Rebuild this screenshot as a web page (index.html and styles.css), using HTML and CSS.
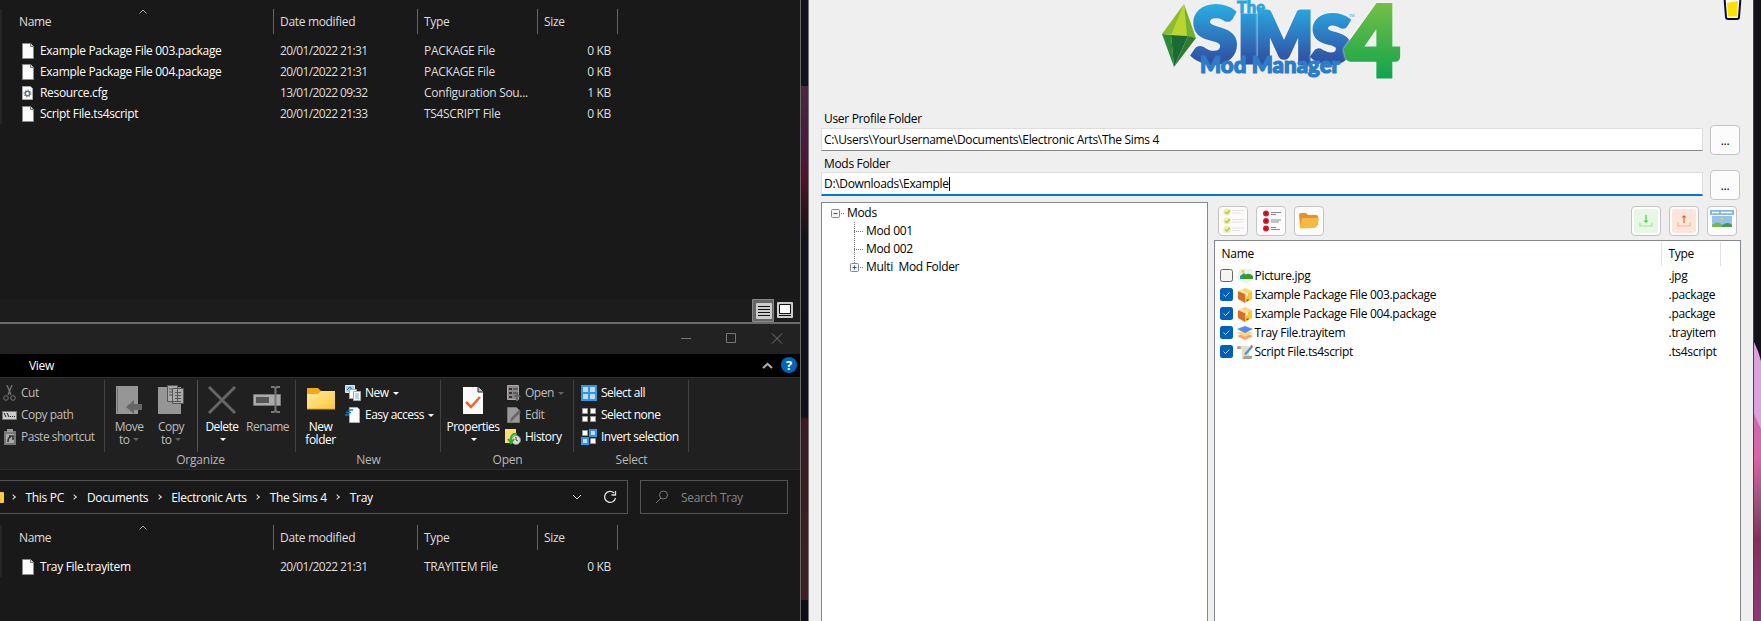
FILE: index.html
```
<!DOCTYPE html>
<html lang="en">
<head>
  <meta charset="UTF-8" />
  <meta name="viewport" content="width=device-width, initial-scale=1" />
  <title>The Sims 4 Mod Manager</title>
  <link rel="stylesheet" href="styles.css">
</head>
<body>
  <!-- shared icons -->
  <svg class="defs" width="0" height="0">
    <symbol id="file" viewBox="0 0 12 16"><path d="M.5.5h8l3 3v12H.5z" fill="#fbfbfb" stroke="#8a8a8a"/><path d="M8.5.5v3h3" fill="#ddd" stroke="#777"/></symbol>
    <symbol id="up" viewBox="0 0 8 5"><path d="M.5 4.500 4 1l3.500 3.500" fill="none" stroke="#aaa"/></symbol>
    <symbol id="box" viewBox="0 0 16 16"><path d="M1 4 8 7v9l-7-4z" fill="#d5702a"/><path d="M8 7l7-3v8l-7 4z" fill="#fcc62e"/><path d="M1 4 8 1l7 3-7 3z" fill="#ffd76f"/><path d="M4 2.700 11 5.700v3l-2 1v-3L2.500 3.500z" fill="#f3e5c8"/><path d="M9.500 13l2-1v1.500l-2 1z" fill="#70501c"/></symbol>
    <symbol id="check" viewBox="0 0 13 13"><rect width="13" height="13" rx="2.500" fill="#005fb8"/><path d="M3.500 6.500l2 2 4-4" fill="none" stroke="#bcd9f2"/></symbol>
  </svg>

  <div class="desktop">
    <div class="explorers">
      <div class="window top">
        <div class="files">
          <div class="row head">
            <span class="name">Name<svg class="sort" width="8" height="5"><use href="#up"/></svg></span><span>Date modified</span><span>Type</span><span>Size</span>
          </div>
          <div class="row"><span class="name"><svg width="12" height="16"><use href="#file"/></svg>Example Package File 003.package</span><span class="date">20/01/2022 21:31</span><span>PACKAGE File</span><span class="size">0 KB</span></div>
          <div class="row"><span class="name"><svg width="12" height="16"><use href="#file"/></svg>Example Package File 004.package</span><span class="date">20/01/2022 21:31</span><span>PACKAGE File</span><span class="size">0 KB</span></div>
          <div class="row"><span class="name"><svg width="12" height="16" viewBox="0 0 12 16"><path d="M.5 1.500h8l2 2v11H.5z" fill="#fbfbfb" stroke="#aaa"/><circle cx="5.500" cy="8.500" r="2.300" fill="none" stroke="#607078" stroke-width="1.500"/><circle cx="5.500" cy="8.500" r="3.500" fill="none" stroke="#607078" stroke-dasharray="1 1.750"/></svg>Resource.cfg</span><span class="date">13/01/2022 09:32</span><span>Configuration Sou...</span><span class="size">1 KB</span></div>
          <div class="row"><span class="name"><svg width="12" height="16"><use href="#file"/></svg>Script File.ts4script</span><span class="date">20/01/2022 21:33</span><span>TS4SCRIPT File</span><span class="size">0 KB</span></div>
        </div>
        <div class="status">
          <svg width="44" height="23" viewBox="0 0 44 23">
            <path d="M.5.500h21v22H.5z" fill="#666" stroke="#888"/>
            <rect x="4" y="4" width="16" height="16" rx="1" fill="#ccc"/>
            <path d="M6 7.500h12M6 10.500h12M6 13.500h12M6 16.500h12" stroke="#111"/>
            <rect x="25" y="3" width="16" height="16" rx="1" fill="#ccc"/>
            <path d="M27.500 5.500h11v9h-11z" fill="#fff" stroke="#111"/><path d="M27 16.500h12" stroke="#111"/>
          </svg>
        </div>
      </div>

      <div class="window bottom">
        <div class="titlebar">
          <svg width="104" height="30" viewBox="0 0 104 30" fill="none" stroke="#777"><path d="M1 14.500h10M46.500 9.500h9v9h-9zM92 9.500l10 10M102 9.500l-10 10"/></svg>
        </div>
        <div class="tabs">
          <span>View</span>
          <svg width="38" height="23" viewBox="0 0 38 23"><path d="M3 14l4.500-4 4.500 4" fill="none" stroke="#aaa" stroke-width="2.200"/><circle cx="29" cy="11" r="8" fill="#0067b8"/><text x="29" y="15.500" text-anchor="middle" class="help">?</text></svg>
        </div>
        <div class="ribbon">
          <div class="group clipboard">
            <div class="items list dim">
              <div><svg width="16" height="16" viewBox="0 0 16 16" fill="none" stroke="#777"><path d="M6 0l4 10M11 0 7 10" stroke-width="1.300"/><circle cx="5" cy="13" r="2.300"/><circle cx="12" cy="13" r="2.300"/></svg>Cut</div>
              <div><svg width="16" height="16" viewBox="0 0 16 16"><path d="M1.500 4.500h14v8h-14z" fill="#ccc" stroke="#777"/><path d="M3 6l2 4M6 6l2 4M9 9.500h1M11 9.500h1M13 9.500h1" stroke="#222"/></svg>Copy path</div>
              <div><svg width="16" height="16" viewBox="0 0 16 16"><path d="M3 2h12v14H3z" fill="#777"/><path d="M6 0h6v3H6z" fill="#999"/><path d="M5 5h8v9H5z" fill="#aaa"/><path d="M7 13c0-4 1-5 3-5M8 7h4v4" fill="none" stroke="#333" stroke-width="1.600"/></svg>Paste shortcut</div>
            </div>
            <p></p>
          </div>
          <div class="group organize">
            <div class="items">
              <div class="big dim"><svg width="28" height="32" viewBox="0 0 28 32"><path d="M1 1h22v28H1z" fill="#969696"/><path d="M2 2h1v26H2z" fill="#777"/><path d="M11 22l8-7v4h8v6h-8v4z" fill="#666"/></svg>Move<br>to <i></i></div>
              <div class="big copy dim"><svg width="28" height="32" viewBox="0 0 28 32"><path d="M1 2h23v27H1z" fill="#969696"/><path d="M10.500.500h10v16h-10zM15.500 3.500h11v15h-11z" fill="#aaa" stroke="#555"/><path d="M12 4h3M12 7h3M12 10h3M18 7.500h6M18 10.500h6M18 13.500h6M18 16.500h6" stroke="#555"/></svg>Copy<br>to <i></i></div>
              <div class="big delete"><svg width="30" height="32" viewBox="0 0 30 32"><path d="M2 2l26 26M28 2 2 28" stroke="#666" stroke-width="3"/></svg>Delete<br><i></i></div>
              <div class="big rename dim"><svg width="30" height="32" viewBox="0 0 30 32"><path d="M1.500 9.500h27v11h-27z" fill="#aaa" stroke="#777"/><path d="M4 12h13v6H4z" fill="#555"/><path d="M19 2h3l1.500 1L25 2h3M23.500 3v23M19 27h3l1.500-1 1.500 1h3" fill="none" stroke="#777" stroke-width="2"/></svg>Rename</div>
            </div>
            <p>Organize</p>
          </div>
          <div class="group new">
            <div class="items">
              <div class="big"><svg width="30" height="32" viewBox="0 0 30 32"><path d="M1 3h11l3 3h14v5H1z" fill="#f0aa16"/><path d="M1 9h11l3-3h14v18H1z" fill="url(#fold)"/><path d="M1 24h28" stroke="#e5a31c"/><defs><linearGradient id="fold" x2="1" y2="1"><stop stop-color="#ffe9a0"/><stop offset="1" stop-color="#fdca3b"/></linearGradient></defs></svg>New<br>folder</div>
              <div class="list">
                <div><svg width="16" height="16" viewBox="0 0 16 16"><path d="M.5.500h9v7h-9z" fill="#9cd2f1" stroke="#eee"/><path d="M2 5l3-3 3 4" fill="none" stroke="#27668e"/><path d="M4.500 4.500h7v9h-7z" fill="#fff" stroke="#aaa"/><path d="M8.500 6.500h7v9h-7z" fill="#fff" stroke="#aaa"/><path d="M10 9h4M10 11h4M10 13h4" stroke="#79a9cd"/></svg>New <i></i></div>
                <div><svg width="16" height="16" viewBox="0 0 16 16"><path d="M4.500.500h8l2 2v13h-10z" fill="#fbfbfb" stroke="#aaa"/><path d="M3 3h5M1 5.500h5M0 8h4" stroke="#1677cb" stroke-width="1.500"/></svg>Easy access <i></i></div>
              </div>
            </div>
            <p>New</p>
          </div>
          <div class="group open">
            <div class="items">
              <div class="big"><svg width="24" height="32" viewBox="0 0 24 32"><path d="M2 2h16l4 4v23H2z" fill="#fafafa"/><path d="M17 1v6h6z" fill="#bbb" stroke="#222"/><path d="M5 17l5 5 9-10" fill="none" stroke="#f2622a" stroke-width="2.500"/></svg>Properties<br><i></i></div>
              <div class="list">
                <div class="dim"><svg width="16" height="16" viewBox="0 0 16 16"><path d="M2.500.500h11v14h-11z" fill="#888" stroke="#aaa"/><path d="M4 3h3v2H4zM4 7h3v2H4zM4 11h3v2H4z" fill="#333"/><path d="M8 4h5M8 8h5" stroke="#333"/><path d="M8 12l4-4 4 4h-3v4h-2v-4z" fill="#666"/></svg>Open <i></i></div>
                <div class="dim"><svg width="16" height="16" viewBox="0 0 16 16"><path d="M2.500.500h9l3 3v12h-12z" fill="#999" stroke="#777"/><path d="M5 15l1-4L14 3l2 2-8 8z" fill="#666"/></svg>Edit</div>
                <div><svg width="16" height="16" viewBox="0 0 16 16"><path d="M0 0h11v14H0z" fill="#ffdc74"/><circle cx="11" cy="11" r="4.500" fill="#ddd" stroke="#888"/><path d="M11 8v3l2 1" fill="none" stroke="#444"/><path d="M12 5C7 4 5 8 6 13M3 10l3 4 3-4" fill="none" stroke="#28b32d" stroke-width="2"/></svg>History</div>
              </div>
            </div>
            <p>Open</p>
          </div>
          <div class="group select">
            <div class="items list">
              <div><svg width="16" height="16" viewBox="0 0 16 16"><path d="M0 0h16v16H0z" fill="#3493e5"/><path d="M2 2h5v5H2zM9 2h5v5H9zM2 9h5v5H2zM9 9h5v5H9z" fill="#b7defb"/></svg>Select all</div>
              <div><svg width="16" height="16" viewBox="0 0 16 16"><path d="M1.500 1.500h5v5h-5zM9.500 1.500h5v5h-5zM1.500 9.500h5v5h-5zM9.500 9.500h5v5h-5z" fill="#fff" stroke="#999"/></svg>Select none</div>
              <div><svg width="16" height="16" viewBox="0 0 16 16"><path d="M8 0h8v8H8zM0 8h8v8H0z" fill="#3493e5"/><path d="M10 2h4v4h-4zM2 10h4v4H2z" fill="#b7defb"/><path d="M1.500 1.500h5v5h-5zM9.500 9.500h5v5h-5z" fill="#fff" stroke="#999"/></svg>Invert selection</div>
            </div>
            <p>Select</p>
          </div>
        </div>

        <div class="address">
          <div class="path">
            <b class="folder"></b><em></em><span>This PC</span><em></em><span>Documents</span><em></em><span>Electronic Arts</span><em></em><span>The Sims 4</span><em></em><span>Tray</span>
            <svg width="48" height="20" viewBox="0 0 48 20" fill="none" stroke="#ddd"><path d="M2 8l4 4 4-4"/><path d="M43 6a5.500 5.500 0 1 0 1.500 5M44.500 4v4h-4" stroke-width="1.300"/></svg>
          </div>
          <div class="search"><svg width="14" height="14" viewBox="0 0 14 14" fill="none" stroke="#777"><circle cx="8.500" cy="5" r="4"/><path d="M6 8l-5 5"/></svg>Search Tray</div>
        </div>
        <div class="files">
          <div class="row head">
            <span class="name">Name<svg class="sort" width="8" height="5"><use href="#up"/></svg></span><span>Date modified</span><span>Type</span><span>Size</span>
          </div>
          <div class="row"><span class="name"><svg width="12" height="16"><use href="#file"/></svg>Tray File.trayitem</span><span class="date">20/01/2022 21:31</span><span>TRAYITEM File</span><span class="size">0 KB</span></div>
        </div>
      </div>
    </div>

    <div class="manager">
      <header>
        <svg class="logo" width="290" height="90" viewBox="0 0 290 90">
          <defs>
            <linearGradient id="blue" gradientUnits="userSpaceOnUse" x1="0" y1="6" x2="0" y2="66"><stop stop-color="#29abe2"/><stop offset=".85" stop-color="#2f57a8"/><stop offset="1" stop-color="#2f4fa0"/></linearGradient>
            <linearGradient id="green" gradientUnits="userSpaceOnUse" x1="0" y1="4" x2="0" y2="78"><stop stop-color="#72bf44"/><stop offset="1" stop-color="#12a44d"/></linearGradient>
          </defs>
          <path d="M44 4 22 34l13 1z" fill="#8db92e"/><path d="M44 4 31 35l17 1z" fill="#b9d531"/><path d="M44 4l12 34-9-2z" fill="#78b02c"/>
          <path d="M22 34l9 1 3 32z" fill="#2d8a35"/><path d="M31 35l17 1-14 31z" fill="#176b33"/><path d="M48 36l8 2-22 29z" fill="#2f7b32"/>
          <g class="sims" fill="url(#blue)" stroke="url(#blue)">
            <text x="52" y="62" font-size="76" textLength="45" lengthAdjust="spacingAndGlyphs">S</text>
            <text x="98" y="62" font-size="62" textLength="22" lengthAdjust="spacingAndGlyphs">I</text>
            <text x="115" y="63" font-size="70" textLength="58" lengthAdjust="spacingAndGlyphs">M</text>
            <text x="172" y="62" font-size="63" textLength="39" lengthAdjust="spacingAndGlyphs">S</text>
          </g>
          <text class="four" x="206" y="76" font-size="97" textLength="54" lengthAdjust="spacingAndGlyphs" fill="url(#green)" stroke="url(#green)">4</text>
          <text class="the" x="97" y="12.500" textLength="28" lengthAdjust="spacingAndGlyphs">The</text>
          <text class="tm" x="209" y="17">TM</text>
          <text class="sub" x="60" y="73" textLength="140" lengthAdjust="spacingAndGlyphs">Mod Manager</text>
        </svg>
        <svg class="drink" width="20" height="21" viewBox="0 0 20 21"><path d="M1.500-2 3 17q0 2 2 2h9q2 0 2-2l1.500-19z" fill="#fff" stroke="#0e0b2e" stroke-width="2"/><path d="M4 3l5-1 6-1-1 15.500H5z" fill="#ffe100"/></svg>
      </header>
      <label>User Profile Folder</label>
      <div class="field"><div class="input">C:\Users\YourUsername\Documents\Electronic Arts\The Sims 4</div><div class="button">...</div></div>
      <label>Mods Folder</label>
      <div class="field"><div class="input active">D:\Downloads\Example<span class="caret"></span></div><div class="button">...</div></div>

      <div class="panes">
        <div class="tree">
          <div class="node"><svg width="14" height="18" viewBox="0 0 14 18"><rect x=".5" y="5.500" width="8" height="8" rx="1" fill="#f5f5f5" stroke="#888"/><path d="M2.500 9.500h4" stroke="#3050a8"/><path d="M10 9.500h4" stroke="#777" stroke-dasharray="1 1"/></svg>Mods</div>
          <div class="node child"><svg width="14" height="18" viewBox="0 0 14 18"><path d="M4.500 0v18M4 9.500h9" stroke="#777" stroke-dasharray="1 1"/></svg>Mod 001</div>
          <div class="node child"><svg width="14" height="18" viewBox="0 0 14 18"><path d="M4.500 0v18M4 9.500h9" stroke="#777" stroke-dasharray="1 1"/></svg>Mod 002</div>
          <div class="node child"><svg width="14" height="18" viewBox="0 0 14 18"><path d="M4.500 0v5M10 9.500h4" stroke="#777" stroke-dasharray="1 1"/><rect x=".5" y="5.500" width="8" height="8" rx="1" fill="#f5f5f5" stroke="#888"/><path d="M2.500 9.500h4M4.500 7.500v4" stroke="#3050a8"/></svg>Multi&nbsp; Mod Folder</div>
        </div>
        <div class="mods">
          <div class="toolbar">
            <div class="button"><svg width="24" height="26" viewBox="0 0 24 26"><g fill="#f8eb9b"><circle cx="6" cy="4" r="3.600"/><circle cx="6" cy="13" r="3.600"/><circle cx="6" cy="21.500" r="3.600"/></g><path d="M4 4l2 1.500L9 2M4 13l2 1.500L9 11M4 21.500l2 1.500 3-3.500" fill="none" stroke="#8fd07c" stroke-width="1.500"/><path d="M11 2.500h12M11 5h8M11 11.500h12M11 14h11M11 20h12M11 22.500h8" stroke="#eadfdc"/></svg></div>
            <div class="button"><svg width="24" height="26" viewBox="0 0 24 26"><g fill="#e01c2d"><circle cx="7" cy="5.500" r="3"/><circle cx="7" cy="13" r="3"/><circle cx="7" cy="20.500" r="3"/></g><path d="M5.500 4l3 3m0-3-3 3m0 4.500 3 3m0-3-3 3m0 4.500 3 3m0-3-3 3" stroke="#96101c"/><path d="M12 4.500h10M12 6.500h5M12 12h10M12 14h8M12 19.500h5M12 21.500h9" stroke="#888"/></svg></div>
            <div class="button"><svg width="24" height="26" viewBox="0 0 24 26"><path d="M2 7q0-2 2-2h5l2 2h8q2 0 2 2v8H3z" fill="#e88f33"/><path d="M6 10h15q1 0 1 1l-2 7q-1 2-3 2L4 20.500q-2 0-1-3l2-7z" fill="#f7b940"/></svg></div>
            <div class="space"></div>
            <div class="button"><svg width="26" height="26" viewBox="0 0 26 26" fill="none"><rect x="1" y="1" width="24" height="24" rx="3" fill="#e8f7e5"/><path d="M7 14.500v3.500h12v-3.500" stroke="#a6e495" stroke-width="1.200"/><path d="M13 7v7" stroke="#70d75f" stroke-width="1.500"/><path d="M10.500 12.500h5L13 15z" fill="#4dcc40"/></svg></div>
            <div class="button"><svg width="26" height="26" viewBox="0 0 26 26" fill="none"><rect x="1" y="1" width="24" height="24" rx="3" fill="#fce6dc"/><path d="M7 14.500v3.500h12v-3.500" stroke="#fbb28d" stroke-width="1.200"/><path d="M13 9v6" stroke="#ed805d" stroke-width="1.500"/><path d="M10.500 9.500h5L13 7z" fill="#e85b30"/></svg></div>
            <div class="button"><svg width="26" height="26" viewBox="0 0 26 26"><path d="M1 2h24v5H1z" fill="#83b6e5"/><path d="M3 4.500h7M12 4.500h11" stroke="#fff" stroke-width="1.500"/><path d="M3 8h20v11H3z" fill="#94c2ed"/><circle cx="13" cy="11" r="1.300" fill="#ffc73a"/><path d="M3 17q6-6 12 2H3z" fill="#76b74a"/><path d="M13 17q6-4 10 0v2H13z" fill="#4b994b"/></svg></div>
          </div>
          <div class="modlist">
            <div class="mod modhead"><span>Name</span><span>Type</span><span></span></div>
            <div class="mod"><span><svg width="13" height="13" viewBox="0 0 13 13"><rect x=".5" y=".5" width="12" height="12" rx="2" fill="#f4f4f4" stroke="#666"/></svg><svg class="icon" width="16" height="16" viewBox="0 0 16 16"><path d="M2 1h13v12L8 15 0 11z" fill="#eceff1"/><path d="M3 8l4-3 4 4v2H3z" fill="#28a06d"/><path d="M6 9q4-6 10-1v3H6z" fill="#3a9b28"/><circle cx="6" cy="3.500" r="1.500" fill="#ffc42b"/></svg>Picture.jpg</span><span>.jpg</span></div>
            <div class="mod"><span><svg width="13" height="13"><use href="#check"/></svg><svg class="icon" width="16" height="16"><use href="#box"/></svg>Example Package File 003.package</span><span>.package</span></div>
            <div class="mod"><span><svg width="13" height="13"><use href="#check"/></svg><svg class="icon" width="16" height="16"><use href="#box"/></svg>Example Package File 004.package</span><span>.package</span></div>
            <div class="mod"><span><svg width="13" height="13"><use href="#check"/></svg><svg class="icon" width="16" height="16" viewBox="0 0 16 16"><path d="M0 11l8-3 8 3-8 4z" fill="#ff9e6e"/><path d="M0 8l8-3 8 3-8 4z" fill="#ffd578"/><path d="M0 4l8-3 8 3-8 4z" fill="#528dfa"/></svg>Tray File.trayitem</span><span>.trayitem</span></div>
            <div class="mod"><span><svg width="13" height="13"><use href="#check"/></svg><svg class="icon" width="16" height="16" viewBox="0 0 16 16"><path d="M2 2h10v10h3v3H5V5H0q0-3 2-3z" fill="#e1dccb"/><path d="M0 5q0-3 2-3t2 3zM7 12h8q0 3-2 3H6z" fill="#a8a28c"/><path d="M7 10 13 3l2 1.500-6 6.500z" fill="#37a0db"/><path d="M13 3l1-2 2 1-1 2.500z" fill="#ef515b"/></svg>Script File.ts4script</span><span>.ts4script</span></div>
          </div>
        </div>
      </div>
    </div>
    <div class="wallpaper">
      <svg width="8" height="621" viewBox="0 0 8 621">
        <defs><linearGradient id="petal" gradientUnits="userSpaceOnUse" x1="0" y1="415" x2="0" y2="621"><stop stop-color="#cf6bb0"/><stop offset=".2" stop-color="#d765a8"/><stop offset=".45" stop-color="#955079"/><stop offset=".6" stop-color="#84305f"/><stop offset="1" stop-color="#8b3a76"/></linearGradient></defs>
        <path d="M0 342Q6 354 8 366V621H0z" fill="#d9a2dc"/><path d="M0 414l8 17v190H0z" fill="url(#petal)"/>
      </svg>
    </div>
  </div>
</body>
</html>
```
FILE: styles.css
```
body {
  margin: 0;
  font-family: "Open Sans", "Noto Sans", sans-serif;
  font-size: 12px;
  letter-spacing: -0.32px;
  overflow: hidden;
}
svg {
  flex-shrink: 0;
}
.defs {
  position: absolute;
}
.desktop {
  display: flex;
  height: 621px;
  background: linear-gradient(#11111f 86px, #4b2744 86px, #4b173f 150px, #55112c 175px, #2a1218 215px, #12121c 240px, #10101a 416px, #3b1a23 420px, #3d2025 600px, #0d0d18 600px);
}
.explorers {
  width: 801px;
  box-sizing: border-box;
  border-right: 1px solid #666;
  background: #191919;
  color: #fff;
}
.window {
  box-sizing: border-box;
  overflow: hidden;
}
.top {
  height: 324px;
  padding-top: 9px;
  border-bottom: 2px solid #6b6b6b;
  display: flex;
  flex-direction: column;
  justify-content: space-between;
}
.bottom {
  height: 297px;
}
.files {
  border-left: 2px solid #252525;
}
.row {
  display: grid;
  grid-template-columns: 272px 144px 120px 80px;
  height: 21px;
  align-items: center;
  color: #dedede;
}
.row > span {
  padding-left: 6px;
  white-space: nowrap;
}
.row .name {
  display: flex;
  align-items: center;
  gap: 6px;
  padding-left: 20px;
  color: #fff;
}
.row .date {
  letter-spacing: -0.62px;
}
.row .size {
  padding-right: 7px;
  text-align: right;
}
.head {
  height: 25px;
  margin-bottom: 6px;
}
.head > span {
  height: 25px;
  line-height: 26px;
  box-sizing: border-box;
  border-right: 1px solid #636363;
}
.row.head .name {
  color: #dedede;
  padding-left: 17px;
}
.sort {
  align-self: flex-start;
  margin-left: 82px;
}
.status {
  height: 23px;
  display: flex;
  justify-content: flex-end;
  padding-right: 4px;
  background: #1c1c1c;
}
.titlebar {
  height: 30px;
  background: #222;
  display: flex;
  justify-content: flex-end;
  padding-right: 16px;
}
.tabs {
  height: 23px;
  padding: 0 2px 0 29px;
  background: #000;
  display: flex;
  justify-content: space-between;
  align-items: center;
}
.help {
  font-size: 13px;
  font-weight: bold;
  fill: #fff;
}
.ribbon {
  height: 91px;
  display: flex;
  background: #202020;
  border-top: 1px solid #2d2d2d;
  border-bottom: 1px solid #2b2b2b;
  letter-spacing: -0.5px;
}
.group {
  box-sizing: border-box;
  padding-top: 2px;
}
.items {
  display: flex;
  height: 72px;
  border-right: 1px solid #414141;
}
.group p {
  margin: 0;
  height: 16px;
  line-height: 16px;
  text-align: center;
  color: #b8b8b8;
  letter-spacing: -0.2px;
}
.clipboard { width: 105px; }
.organize { width: 191px; }
.new { width: 145px; }
.open { width: 133px; }
.select { width: 115px; }
.list {
  display: flex;
  flex-direction: column;
}
.items.list,
.items .list {
  padding-top: 2px;
  box-sizing: border-box;
}
.list div {
  display: flex;
  align-items: center;
  gap: 4px;
  height: 22px;
  line-height: 20px;
  white-space: nowrap;
}
.dim {
  color: #bdbdbd;
}
.clipboard .list { padding-left: 1px; }
.select .list { padding-left: 7px; }
.big {
  text-align: center;
  line-height: 13px;
  padding-top: 5px;
}
.big svg {
  display: block;
  margin: 0 auto 3px;
}
.organize .big { width: 48px; }
.organize .copy {
  width: 36px;
  padding-right: 8px;
  border-right: 1px solid #555;
}
.organize .delete { width: 48px; }
.organize .rename { width: 41px; }
.new .big { width: 49px; }
.open .big { width: 64px; }
i {
  display: inline-block;
  border: 3px solid transparent;
  border-top-color: currentColor;
  border-bottom: 0;
  vertical-align: 3px;
}
.dim i {
  color: #626262;
}
.big i {
  margin-left: 1px;
}
.address {
  display: flex;
  gap: 12px;
  padding: 10px 0 11px;
}
.path,
.search {
  box-sizing: border-box;
  height: 34px;
  border: 1px solid #535353;
  display: flex;
  align-items: center;
  line-height: 15px;
}
.path {
  width: 628px;
  border-left: 0;
}
.path span {
  margin-right: 8.5px;
}
.path svg {
  margin-left: auto;
  margin-right: 8px;
}
.path em {
  width: 3px;
  height: 3px;
  border: solid #ddd;
  border-width: 1.5px 1.5px 0 0;
  transform: rotate(45deg);
  margin-right: 10.5px;
}
.folder {
  width: 4px;
  height: 11px;
  margin-right: 7px;
  background: #fdca45;
  border-radius: 0 1px 1px 0;
}
.search {
  width: 148px;
  padding-left: 14px;
  gap: 12px;
  color: #858585;
}
.manager {
  width: 945px;
  margin-left: 7px;
  box-sizing: border-box;
  background: #efefef;
  border-left: 1px solid #777;
  padding: 0 12px;
  color: #000;
}
header {
  height: 110px;
  display: flex;
}
.logo {
  margin-left: 319px;
}
.drink {
  margin-left: auto;
  margin-right: -2px;
}
.sims text,
.four,
.sub,
.the {
  font-family: Lato, "Open Sans", sans-serif;
  font-weight: 900;
  letter-spacing: 0;
}
.sims text,
.four {
  stroke-width: 5px;
  filter: drop-shadow(0 0 1px #fff);
}
.the {
  font-size: 16px;
  fill: #2aa4dc;
  stroke: #2aa4dc;
  stroke-width: 0.8px;
}
.tm {
  font-size: 4px;
  fill: #2aa4dc;
}
.sub {
  font-size: 22px;
  fill: #2c7cc8;
  stroke: #2c7cc8;
  stroke-width: 1.2px;
}
label {
  display: block;
  height: 15px;
  line-height: 17px;
  padding-left: 3px;
}
.field {
  height: 30px;
  display: flex;
  align-items: center;
  justify-content: space-between;
}
.input {
  width: 882px;
  height: 23px;
  box-sizing: border-box;
  display: flex;
  align-items: center;
  margin-bottom: 1px;
  padding-left: 2px;
  background: #fff;
  border: 1px solid #ddd;
  border-bottom-color: #868686;
}
.active {
  height: 24px;
  margin-bottom: 2px;
  border-bottom: 2px solid #0078d4;
}
.caret {
  width: 1px;
  height: 14px;
  background: #000;
}
.button {
  width: 30px;
  height: 30px;
  box-sizing: border-box;
  border: 1px solid #c4c4c4;
  border-radius: 4px;
  background: #fcfcfc;
  display: flex;
  align-items: center;
  justify-content: center;
}
.field .button {
  margin-right: 1px;
}
.panes {
  display: flex;
  gap: 6px;
  margin-top: 2px;
}
.tree {
  width: 387px;
  height: 430px;
  box-sizing: border-box;
  border: 1px solid #828790;
  background: #fff;
  padding: 0 0 0 9px;
}
.node {
  display: flex;
  align-items: center;
  gap: 2px;
  height: 18px;
}
.node svg {
  margin-top: 2px;
}
.child {
  padding-left: 19px;
}
.mods {
  width: 528px;
}
.toolbar {
  display: flex;
  gap: 8px;
  padding: 4px;
}
.space {
  flex: 1;
}
.modlist {
  height: 400px;
  box-sizing: border-box;
  border: 1px solid #828790;
  background: #fff;
}
.mod {
  display: grid;
  grid-template-columns: 447px 59px 1fr;
  height: 19px;
  align-items: center;
}
.mod > span {
  display: flex;
  align-items: center;
  padding-left: 5px;
}
.mod > span + span {
  padding-left: 7px;
}
.mod .icon {
  margin: 0 2px 0 4px;
}
.modhead {
  height: 25px;
}
.modhead span {
  height: 24px;
  padding-left: 7px;
  border-right: 1px solid #e2e2e2;
  box-sizing: border-box;
}
.modhead span:last-child {
  border: 0;
}
.wallpaper {
  width: 8px;
  background: #11121a;
  box-sizing: border-box;
  border-left: 1px solid #444;
}
```
